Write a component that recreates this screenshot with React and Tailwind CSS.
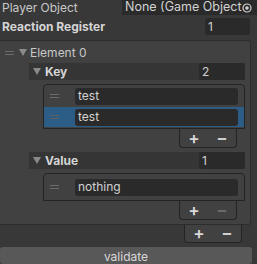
const Handle = ({ dim }) => (
    <div className="flex flex-col gap-[2px] w-[9px]">
        <div className={`h-px ${dim ? "bg-[#5f5f5f]" : "bg-[#6b6b6b]"}`} />
        <div className={`h-px ${dim ? "bg-[#5f5f5f]" : "bg-[#6b6b6b]"}`} />
    </div>
);

const Tri = () => (
    <svg width="8" height="7" viewBox="0 0 8 7" className="shrink-0">
        <polygon points="0,0 8,0 4,7" fill="#8a8a8a" />
    </svg>
);

const Footer = ({ minusDim, className }) => (
    <div
        className={`flex items-center justify-around w-[58px] h-[19px] bg-[#414141] border border-t-0 border-[#242424] rounded-b-[4px] ${className}`}
    >
        <span className="text-[17px] leading-none text-[#d8d8d8] font-semibold">+</span>
        <span className={`text-[17px] leading-none font-semibold ${minusDim ? "text-[#6a6a6a]" : "text-[#cfcfcf]"}`}>
            −
        </span>
    </div>
);

const Header = ({ label, count }) => (
    <div className="flex items-center h-[17px] ml-[29px] mr-[5px] bg-[#353535]">
        <div className="pl-[4px] pr-[4px]">
            <Tri />
        </div>
        <span className="flex-1 font-bold text-[#d4d4d4]">{label}</span>
        <div className="w-[46px] h-[17px] bg-[#2a2a2a] rounded-[2px] pl-[3px] flex items-center text-[#d2d2d2]">
            {count}
        </div>
    </div>
);

const ListRow = ({ text, selected }) => (
    <div className={`flex items-center h-[20px] pl-[6px] pr-[6px] ${selected ? "bg-[#2c5d87]" : ""}`}>
        <Handle dim={selected} />
        <div className="ml-[16px] flex-1 h-[17px] bg-[#2a2a2a] rounded-[3px] pl-[3px] flex items-center text-[#d2d2d2]">
            {text}
        </div>
    </div>
);

const App = () => {
    return (
        <div
            className="w-[257px] h-[264px] bg-[#383838] overflow-hidden flex flex-col text-[12px] leading-none text-[#c8c8c8]"
            style={{ fontFamily: "Inter, 'Noto Sans', sans-serif" }}
        >
            <div className="flex items-center h-[15px]">
                <span className="w-[122px] pl-[2px]">Player Object</span>
                <div className="flex-1 h-[15px] bg-[#2a2a2a] flex items-center pl-[3px] pr-[5px] overflow-hidden">
                    <span className="flex-1 whitespace-nowrap overflow-hidden text-[12.5px] text-[#d2d2d2]">
                        None (Game Object)
                    </span>
                    <svg width="10" height="10" viewBox="0 0 10 10" className="shrink-0">
                        <circle cx="5" cy="5" r="4" fill="none" stroke="#d0d0d0" strokeWidth="1.2" />
                        <circle cx="5" cy="5" r="1.8" fill="#d0d0d0" />
                    </svg>
                </div>
            </div>

            <div className="flex items-center h-[17px] mt-[3px]">
                <span className="flex-1 pl-[2px] font-bold text-[#d4d4d4]">Reaction Register</span>
                <div className="w-[45px] h-[17px] mr-[7px] bg-[#2a2a2a] rounded-[3px] pl-[3px] flex items-center text-[#d2d2d2]">
                    1
                </div>
            </div>

            <div className="mt-[5px] w-[251px] bg-[#414141] border border-l-0 border-[#2d2d2d] rounded-r-[3px] pt-[5px] pb-[4px]">
                <div className="flex items-center h-[13px] pl-[5px]">
                    <Handle />
                    <div className="ml-[5px]">
                        <Tri />
                    </div>
                    <span className="ml-[3px]">Element 0</span>
                </div>

                <div className="mt-[4px]">
                    <Header label="Key" count="2" />
                    <div className="ml-[43px] mr-[5px] mt-[4px] border border-[#242424] rounded-t-[4px] py-px">
                        <ListRow text="test" />
                        <div className="h-px" />
                        <ListRow text="test" selected />
                    </div>
                    <Footer className="ml-auto mr-[13px]" />
                </div>

                <div className="mt-[4px]">
                    <Header label="Value" count="1" />
                    <div className="ml-[43px] mr-[5px] mt-[4px] border border-[#242424] rounded-t-[4px] py-[3px]">
                        <ListRow text="nothing" />
                    </div>
                    <Footer className="ml-auto mr-[13px]" minusDim />
                </div>
            </div>

            <Footer className="ml-auto mr-[15px] w-[57px] h-[21px] bg-[#3b3b3b]" />

            <div className="mt-[4px] w-[252px] h-[20px] bg-[#585858] rounded-[3px] flex justify-center pt-[4px] text-[#d8d8d8]">
                validate
            </div>
        </div>
    );
};

export default App;
